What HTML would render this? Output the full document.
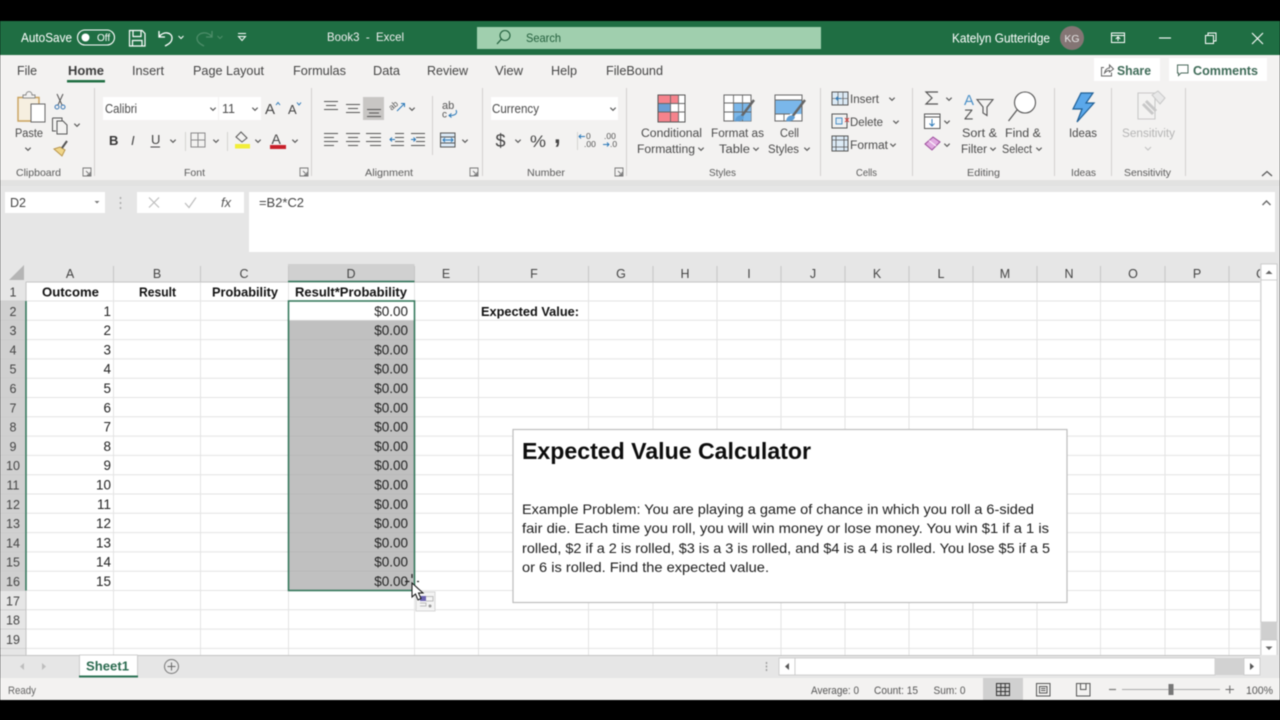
<!DOCTYPE html>
<html><head><meta charset="utf-8"><title>Book3 - Excel</title>
<style>
html,body{margin:0;padding:0;background:#000;width:1280px;height:720px;overflow:hidden}
svg{display:block;filter:blur(.4px)}
text{font-family:"Liberation Sans",sans-serif;white-space:pre}
.rb{font-size:11.5px;fill:#4a4a4a}
.gl{font-size:10.5px;fill:#5a5a5a}
.tb{font-size:13px;fill:#454545}
.hd{font-size:12.5px;fill:#444;text-anchor:middle}
.rn{font-size:12.5px;fill:#444;text-anchor:middle}
.cb{font-size:13px;font-weight:bold;fill:#111}
.cn{font-size:13.5px;fill:#222;text-anchor:end}
.body{font-size:14px;fill:#1c1c1c}
.ic{fill:none;stroke:#555;stroke-width:1.1}
.ch{fill:none;stroke:#555;stroke-width:1.1}
</style></head><body>
<svg width="1280" height="720" viewBox="0 0 1280 720" xmlns="http://www.w3.org/2000/svg">
<defs>
<path id="c" d="M-2.7 -1.3 L0 1.3 L2.7 -1.3" fill="none" stroke="#555" stroke-width="1.1"/>
<path id="lau" d="M-4 -4H4V4H-4ZM-1 -1L3 3M3 0V3H0" fill="none" stroke="#777" stroke-width=".9"/>
</defs>
<rect width="1280" height="720" fill="#000"/>
<!-- title bar -->
<rect y="21" width="1280" height="34" fill="#1f6e43"/>
<text x="21" y="42" font-size="12.5" fill="#fff" textLength="51" lengthAdjust="spacingAndGlyphs">AutoSave</text>
<rect x="77.5" y="30" width="37" height="15" rx="7.5" fill="none" stroke="#fff" stroke-width="1.1"/>
<circle cx="85.5" cy="37.5" r="4" fill="#fff"/>
<text x="97" y="41" font-size="10" fill="#fff">Off</text>
<path d="M129.5 30.5H142L145 33.5V46H129.5ZM133 30.5V36.5H141V30.5M132.5 46V40.5H142V46" fill="none" stroke="#fff" stroke-width="1.2"/>
<path d="M159 31V37H165M159.5 36.5C163 31 172 32 172 38C172 42 169 44 165 46" fill="none" stroke="#fff" stroke-width="1.3"/>
<path d="M178.5 36L181 38.5L183.5 36" fill="none" stroke="#fff" stroke-width="1"/>
<path d="M212 31V37H206M211.5 36.5C208 31 198 32 197 38C197 42 200 44 204 46" fill="none" stroke="#4d8d69" stroke-width="1.3"/>
<path d="M217.5 36L220 38.5L222.5 36" fill="none" stroke="#4d8d69" stroke-width="1"/>
<path d="M238 33.5H246M238.5 36.5H245.5L242 40.5Z" fill="none" stroke="#fff" stroke-width="1"/>
<text x="327" y="41" font-size="12" fill="#f0f0f0" textLength="77" lengthAdjust="spacingAndGlyphs">Book3  -  Excel</text>
<rect x="477" y="27" width="344" height="22" fill="#a0cfae"/>
<circle cx="505" cy="35.5" r="5" fill="none" stroke="#1f5c3a" stroke-width="1.1"/>
<path d="M501.5 39L497 44" stroke="#1f5c3a" stroke-width="1.2"/>
<text x="526" y="42" font-size="12" fill="#245f3d" textLength="35" lengthAdjust="spacingAndGlyphs">Search</text>
<text x="952" y="42.5" font-size="12.5" fill="#fff" textLength="98" lengthAdjust="spacingAndGlyphs">Katelyn Gutteridge</text>
<circle cx="1072" cy="38" r="12" fill="#847574"/>
<text x="1072" y="42" font-size="10.5" fill="#e8e8e8" text-anchor="middle">KG</text>
<path d="M1111.5 33H1124.5V42.5H1111.5ZM1111.5 35.5H1124.5M1118 41V37M1115.8 39L1118 36.8L1120.2 39" fill="none" stroke="#fff" stroke-width="1"/>
<path d="M1159 38H1171" stroke="#fff" stroke-width="1.1"/>
<path d="M1205.5 35.5H1213.5V43.5H1205.5ZM1208 35.5V33H1216V41H1213.5" fill="none" stroke="#fff" stroke-width="1"/>
<path d="M1252 33L1263 44M1263 33L1252 44" stroke="#fff" stroke-width="1.1"/>
<!-- ribbon -->
<rect y="55" width="1280" height="125" fill="#f3f2f1"/>
<rect y="180" width="1280" height="6" fill="#e2e2e1"/>
<text class="tb" x="17" y="75" textLength="20" lengthAdjust="spacingAndGlyphs">File</text>
<text class="tb" x="68" y="75" font-weight="bold" style="fill:#3d3d3d" textLength="36" lengthAdjust="spacingAndGlyphs">Home</text>
<rect x="67" y="80" width="38" height="2.5" fill="#1f6e43"/>
<text class="tb" x="132" y="75" textLength="32" lengthAdjust="spacingAndGlyphs">Insert</text>
<text class="tb" x="193" y="75" textLength="71" lengthAdjust="spacingAndGlyphs">Page Layout</text>
<text class="tb" x="293" y="75" textLength="53" lengthAdjust="spacingAndGlyphs">Formulas</text>
<text class="tb" x="373" y="75" textLength="27" lengthAdjust="spacingAndGlyphs">Data</text>
<text class="tb" x="427" y="75" textLength="41" lengthAdjust="spacingAndGlyphs">Review</text>
<text class="tb" x="495" y="75" textLength="28" lengthAdjust="spacingAndGlyphs">View</text>
<text class="tb" x="551" y="75" textLength="26" lengthAdjust="spacingAndGlyphs">Help</text>
<text class="tb" x="606" y="75" textLength="57" lengthAdjust="spacingAndGlyphs">FileBound</text>
<rect x="1094" y="58" width="66" height="23" fill="#fff"/>
<path d="M1104 67.5H1101.5V76H1111.5V72.5M1104.5 73C1105 70 1107 68 1109.5 68V65L1113.500 69L1109.5 72V70.5C1107.5 70.5 1106 71.500 1104.5 73Z" fill="none" stroke="#666" stroke-width="1"/>
<text x="1117" y="75" font-size="13" font-weight="bold" fill="#3f6b58" textLength="34" lengthAdjust="spacingAndGlyphs">Share</text>
<rect x="1169" y="58" width="98" height="23" fill="#fff"/>
<path d="M1177.5 65H1188V73H1181L1178.5 75.5V73H1177.5Z" fill="none" stroke="#4a6a5c" stroke-width="1"/>
<text x="1193" y="75" font-size="13" font-weight="bold" fill="#3f6b58" textLength="65" lengthAdjust="spacingAndGlyphs">Comments</text>
<!-- separators -->
<path d="M94.5 88V176M311.5 88V176M482.5 88V176M432.5 96V155M626.500 88V176M820.5 88V176M912.5 88V176M1054.5 88V176M1111.5 88V176M1185.5 88V176" stroke="#d2d0ce" stroke-width="1"/>
<!-- group labels -->
<text class="gl" x="16" y="176" textLength="45" lengthAdjust="spacingAndGlyphs">Clipboard</text>
<text class="gl" x="184" y="176" textLength="21" lengthAdjust="spacingAndGlyphs">Font</text>
<text class="gl" x="365" y="176" textLength="48" lengthAdjust="spacingAndGlyphs">Alignment</text>
<text class="gl" x="527" y="176" textLength="38" lengthAdjust="spacingAndGlyphs">Number</text>
<text class="gl" x="709" y="176" textLength="27" lengthAdjust="spacingAndGlyphs">Styles</text>
<text class="gl" x="856" y="176" textLength="21" lengthAdjust="spacingAndGlyphs">Cells</text>
<text class="gl" x="967" y="176" textLength="33" lengthAdjust="spacingAndGlyphs">Editing</text>
<text class="gl" x="1071" y="176" textLength="25" lengthAdjust="spacingAndGlyphs">Ideas</text>
<text class="gl" x="1124" y="176" textLength="47" lengthAdjust="spacingAndGlyphs">Sensitivity</text>
<use href="#lau" x="87" y="172"/><use href="#lau" x="304" y="172"/><use href="#lau" x="474" y="172"/><use href="#lau" x="619" y="172"/>
<path d="M1262 176L1267 171.5L1272 176" fill="none" stroke="#555" stroke-width="1.2"/>
<!-- clipboard -->
<path d="M18 97.5H39V121H18Z" fill="#f6efe0" stroke="#c9a15c" stroke-width="1.4"/>
<path d="M23 98V95H26C26 90.5 32 90.500 32 95H35V98Z" fill="#f3f2f1" stroke="#888" stroke-width="1"/>
<rect x="31" y="104" width="14" height="18" fill="#fff" stroke="#666" stroke-width="1"/>
<text class="rb" x="15" y="137" textLength="28" lengthAdjust="spacingAndGlyphs">Paste</text>
<use href="#c" x="28" y="149"/>
<path d="M57 94L62 105M63 94L58 105" stroke="#555" stroke-width="1"/><circle cx="57" cy="107" r="2" fill="none" stroke="#3a78b5"/><circle cx="63" cy="107" r="2" fill="none" stroke="#3a78b5"/>
<path d="M52.5 118H62V121M52.5 118V131H56M57 121H63L67 125V134H57Z" fill="none" stroke="#555" stroke-width="1"/>
<use href="#c" x="77" y="125"/>
<path d="M54 149L62 156L65 150L60 147Z" fill="#f0d68a" stroke="#b8944a" stroke-width="1"/><path d="M62 148L67 141" stroke="#555" stroke-width="2"/>
<!-- font -->
<rect x="103" y="97" width="115" height="23" fill="#fff"/>
<rect x="219" y="97" width="42" height="23" fill="#fff"/>
<text class="rb" x="105" y="113" textLength="32" lengthAdjust="spacingAndGlyphs" style="font-size:12.5px">Calibri</text>
<use href="#c" x="213" y="109"/>
<text class="rb" x="222" y="113" style="font-size:12.5px">11</text>
<use href="#c" x="255" y="109"/>
<text x="265" y="114" font-size="15" fill="#444">A</text><path d="M276 105L278 102.5L280 105" fill="none" stroke="#2a78b8" stroke-width="1"/>
<text x="288" y="114" font-size="13" fill="#444">A</text><path d="M297 102.5L299 105L301 102.5" fill="none" stroke="#2a78b8" stroke-width="1"/>
<text x="109" y="145" font-size="13" font-weight="bold" fill="#333">B</text>
<text x="131" y="145" font-size="13" font-style="italic" fill="#444" font-family="Liberation Serif">I</text>
<text x="151" y="144" font-size="13" fill="#444">U</text><path d="M150.5 147H160" stroke="#444" stroke-width="1"/>
<use href="#c" x="173" y="141"/>
<path d="M185.5 132V151M227.5 132V151" stroke="#d5d3d1"/>
<path d="M191 133H205V147H191ZM198 133V147M191 140H205" fill="none" stroke="#8a8a8a" stroke-width="1"/>
<use href="#c" x="216" y="141"/>
<path d="M236 137L241 132L247 138L242 142Z" fill="none" stroke="#555" stroke-width="1"/>
<rect x="235" y="144" width="15" height="4.5" fill="#f2ee38"/>
<use href="#c" x="258" y="141"/>
<text x="271.5" y="144" font-size="14" fill="#444">A</text>
<rect x="270" y="145" width="16" height="4" fill="#c8202a"/>
<use href="#c" x="295" y="141"/>
<!-- alignment -->
<rect x="363" y="97" width="21" height="23" fill="#c8c6c4"/>
<path class="ic" d="M324 101.5H338M326 105.5H336M324 109.5H338M346 104.5H360M348 108.5H358M346 112.5H360M367 109.5H381M369 113H379M367 116.5H381"/>
<text x="389" y="108" font-size="8.5" fill="#555" transform="rotate(-40 394 106)">ab</text>
<path d="M397 111L404 104M401 103.5H404.5V107" fill="none" stroke="#2a78b8" stroke-width="1"/>
<use href="#c" x="412" y="109"/>
<path class="ic" d="M324 133.5H338M324 137.500H334M324 141.5H338M324 145.5H334M346 133.5H360M348 137.5H358M346 141.5H360M348 145.5H358M366 133.5H381M370 137.5H381M366 141.5H381M370 145.5H381M395 133.5H404M395 137.5H404M395 141.5H404M391 145.5H404M411 133.5H425M416 137.5H425M416 141.5H425M411 145.5H425"/>
<path d="M390 139.5H395M392 137.5L390 139.5L392 141.5M411 139.5H415M413.5 137.5L415.5 139.5L413.5 141.5" fill="none" stroke="#2a78b8" stroke-width="1"/>
<text x="442" y="109" font-size="11" fill="#555">ab</text><text x="442" y="117.5" font-size="10" fill="#555">c</text>
<path d="M456 110C458 114 454 116 449 115.5M451.5 113.5L449 115.5L451.5 117.5" fill="none" stroke="#2a78b8" stroke-width="1"/>
<path d="M440.5 133H455V147H440.5ZM440.5 137H455M440.5 143H455" fill="#dcebf6" stroke="#555" stroke-width="1"/>
<path d="M443 140H453M445 138L443 140L445 142M451 138L453 140L451 142" fill="none" stroke="#2a78b8" stroke-width=".9"/>
<use href="#c" x="465" y="141"/>
<!-- number -->
<rect x="491" y="97" width="127" height="23" fill="#fff"/>
<text class="rb" x="492" y="113" style="font-size:12.5px" textLength="47" lengthAdjust="spacingAndGlyphs">Currency</text>
<use href="#c" x="613" y="109"/>
<text x="495.500" y="147" font-size="18" fill="#444">$</text>
<use href="#c" x="518" y="141"/>
<text x="530" y="147" font-size="17" fill="#444" textLength="16" lengthAdjust="spacingAndGlyphs">%</text>
<text x="554" y="143" font-size="24" font-weight="bold" fill="#444">,</text>
<path d="M577.5 132V150" stroke="#d5d3d1"/>
<text x="586" y="139" font-size="8.5" fill="#555">0</text><text x="584" y="147" font-size="8.5" fill="#555">.00</text>
<path d="M579 136.5H585M581 134.5L579 136.5L581 138.5" fill="none" stroke="#2a78b8" stroke-width=".9"/>
<text x="604" y="139" font-size="8.5" fill="#555">.00</text><text x="610" y="147" font-size="8.5" fill="#555">.0</text>
<path d="M603 144.5H609M607 142.5L609 144.5L607 146.5" fill="none" stroke="#2a78b8" stroke-width=".9"/>
<!-- styles -->
<rect x="658" y="95" width="27" height="27" fill="#fff" stroke="#555"/>
<rect x="658.5" y="95.5" width="20" height="8" fill="#f5838c"/><rect x="658.5" y="112" width="20" height="9.5" fill="#f5838c"/>
<rect x="658.5" y="104" width="12" height="8" fill="#6b9fd4"/>
<path d="M658.5 103.5H685M658.5 112H685M670.5 95V122M678.5 95V122" stroke="#666" fill="none" stroke-width=".9"/>
<text class="rb" x="641" y="137" textLength="61" lengthAdjust="spacingAndGlyphs">Conditional</text>
<text class="rb" x="637" y="153" textLength="58" lengthAdjust="spacingAndGlyphs">Formatting</text>
<use href="#c" x="701" y="149"/>
<rect x="724" y="95" width="27" height="26" fill="#fff" stroke="#666"/>
<rect x="734" y="103" width="17" height="18" fill="#7ab7ea"/>
<path d="M724 103H751M724 112H751M733.5 95V121M742.5 95V121" stroke="#666" stroke-width=".9" fill="none"/>
<path d="M754 100L741 117" stroke="#666" stroke-width="2.5"/><path d="M735 121C736 115 741 114 744 117C743 121 738 122 735 121Z" fill="#5f9fd6"/>
<text class="rb" x="711" y="137" textLength="53" lengthAdjust="spacingAndGlyphs">Format as</text>
<text class="rb" x="719" y="153" textLength="31" lengthAdjust="spacingAndGlyphs">Table</text>
<use href="#c" x="756" y="149"/>
<rect x="775" y="95" width="27" height="26" fill="#fff" stroke="#666"/>
<rect x="775.5" y="100" width="26" height="14" fill="#7ab7ea"/>
<path d="M775 100H802M775 114H790M784 114V121" stroke="#666" stroke-width=".9" fill="none"/>
<path d="M805 100L792 117" stroke="#666" stroke-width="2.5"/><path d="M786 121C787 115 792 114 795 117C794 121 789 122 786 121Z" fill="#5f9fd6"/>
<text class="rb" x="780" y="137" textLength="19" lengthAdjust="spacingAndGlyphs">Cell</text>
<text class="rb" x="768" y="153" textLength="31" lengthAdjust="spacingAndGlyphs">Styles</text>
<use href="#c" x="807" y="149"/>
<!-- cells -->
<rect x="832" y="92" width="16" height="13" fill="#dcebf6" stroke="#555"/>
<path d="M838 98.5H848M838 92V105M843 92V105M832 98.5H838" stroke="#666" stroke-width=".8" fill="none"/><path d="M836 98.5H841M838 96.5L836 98.5L838 100.5" stroke="#2a78b8" fill="none"/>
<text class="rb" x="850" y="103" textLength="29" lengthAdjust="spacingAndGlyphs">Insert</text><use href="#c" x="892" y="99"/>
<rect x="832" y="114" width="15" height="14" fill="#f3f2f1" stroke="#555"/>
<rect x="836" y="118" width="6" height="6" fill="#dcebf6" stroke="#2a78b8" stroke-width=".8"/><path d="M845 118L849 122M849 118L845 122" stroke="#d04040"/>
<text class="rb" x="850" y="126" textLength="33" lengthAdjust="spacingAndGlyphs">Delete</text><use href="#c" x="896" y="122"/>
<rect x="832" y="136" width="16" height="15" fill="#dcebf6" stroke="#555"/>
<path d="M832 140H848M832 147H848M836 136V151M844 136V151" stroke="#555" stroke-width=".8"/>
<text class="rb" x="850" y="149" textLength="38" lengthAdjust="spacingAndGlyphs">Format</text><use href="#c" x="893" y="145"/>
<!-- editing -->
<path d="M938 92H926L932 98L926 104H938" fill="none" stroke="#555" stroke-width="1.2"/><use href="#c" x="949" y="99"/>
<path d="M924.5 114H940V128.5H924.5ZM924.5 117H940" fill="#fff" stroke="#555"/><path d="M932 119V126M929.5 123.5L932 126L934.5 123.5" fill="none" stroke="#2a78b8"/>
<use href="#c" x="947" y="122"/>
<path d="M925 144L933 137L940 142L932 150Z" fill="#e0a8e0" stroke="#9a4a9a"/><path d="M929 140.5L936 146" stroke="#fff"/>
<use href="#c" x="947" y="145"/>
<text x="964" y="105" font-size="15" fill="#4a90c8">A</text><text x="964" y="119.500" font-size="15" fill="#555">Z</text>
<path d="M977 99.5H993L987 107V115.500L983 113V107Z" fill="none" stroke="#555" stroke-width="1.1"/>
<text class="rb" x="962" y="137" textLength="35" lengthAdjust="spacingAndGlyphs">Sort &amp;</text>
<text class="rb" x="961" y="153" textLength="26" lengthAdjust="spacingAndGlyphs">Filter</text><use href="#c" x="993" y="149"/>
<circle cx="1025" cy="102.5" r="10.5" fill="#fff" stroke="#555" stroke-width="1.1"/><path d="M1017 110L1008.5 121" stroke="#555" stroke-width="1.2"/>
<text class="rb" x="1005" y="137" textLength="36" lengthAdjust="spacingAndGlyphs">Find &amp;</text>
<text class="rb" x="1002" y="153" textLength="30" lengthAdjust="spacingAndGlyphs">Select</text><use href="#c" x="1039" y="149"/>
<!-- ideas -->
<path d="M1081 93H1093L1086 103H1094L1077 122L1082 109H1073Z" fill="#5ba8ea" stroke="#1f5f95" stroke-width="1.2"/>
<text class="rb" x="1069" y="137" textLength="28" lengthAdjust="spacingAndGlyphs">Ideas</text>
<!-- sensitivity -->
<path d="M1138 93H1155V119H1138Z" fill="#f3f2f1" stroke="#c8c8c8" stroke-width="1.1"/>
<path d="M1143 104L1153 114M1146 101L1156 111" stroke="#c8c8c8" stroke-width="3" fill="none"/>
<path d="M1152 95L1158 91L1165 98L1160 104Z" fill="#e8e8e8" stroke="#c8c8c8"/>
<text class="rb" x="1122" y="137" style="fill:#b5b5b5" textLength="53" lengthAdjust="spacingAndGlyphs">Sensitivity</text>
<path d="M1145 147L1148 150L1151 147" fill="none" stroke="#c0c0c0"/>
<!-- formula bar -->
<rect y="186" width="1280" height="78" fill="#e6e6e6"/>
<rect x="5" y="192" width="100" height="21" fill="#fff"/>
<text x="10" y="207" font-size="12.5" fill="#444">D2</text>
<path d="M94.5 201H99.5L97 203.5Z" fill="#777"/>
<path d="M120.5 197V199M120.5 202V204M120.5 207V209" stroke="#aaa" stroke-width="1.5"/>
<rect x="137" y="192" width="107" height="21" fill="#fff"/>
<path d="M149 197.5L159 207.5M159 197.5L149 207.5" stroke="#bdbdbd" stroke-width="1.2"/>
<path d="M185 203L189 207.5L196 197.5" fill="none" stroke="#bdbdbd" stroke-width="1.2"/>
<text x="221" y="207" font-size="13" font-style="italic" fill="#555" font-family="Liberation Serif">fx</text>
<rect x="249" y="192" width="1026" height="60" fill="#fff"/>
<text x="259" y="207" font-size="12.5" fill="#444" textLength="45" lengthAdjust="spacingAndGlyphs">=B2*C2</text>
<path d="M1262.5 205L1266.5 201L1270.5 205" fill="none" stroke="#666" stroke-width="1.4"/>
<!-- sheet -->
<rect x="0" y="264" width="1280" height="391" fill="#fff"/>
<rect x="0" y="264" width="1260" height="18" fill="#e6e6e6"/>
<rect x="0" y="282" width="26" height="373" fill="#e6e6e6"/>
<path d="M24 265V280H9Z" fill="#b5b5b5"/>
<rect x="288" y="264" width="126.5" height="18" fill="#d0d0d0"/>
<rect x="0" y="301" width="26" height="289.5" fill="#d0d0d0"/>
<!-- grid lines -->
<path d="M26 301H1260M26 320.3H1260M26 339.6H1260M26 358.9H1260M26 378.2H1260M26 397.5H1260M26 416.8H1260M26 436.1H1260M26 455.4H1260M26 474.7H1260M26 494H1260M26 513.3H1260M26 532.6H1260M26 551.9H1260M26 571.2H1260M26 590.5H1260M26 609.8H1260M26 629.1H1260M26 648.4H1260" stroke="#e4e4e4" stroke-width="1"/>
<path d="M113.5 282V655M200.5 282V655M288.5 282V655M414.5 282V655M478.5 282V655M588.5 282V655M653 282V655M717 282V655M781 282V655M845 282V655M909 282V655M973 282V655M1037 282V655M1100.5 282V655M1165 282V655M1229 282V655" stroke="#e4e4e4" stroke-width="1"/>
<path d="M113.5 266V282M200.5 266V282M288.5 266V282M414.5 266V282M478.5 266V282M588.5 266V282M653 266V282M717 266V282M781 266V282M845 266V282M909 266V282M973 266V282M1037 266V282M1100.5 266V282M1165 266V282M1229 266V282" stroke="#c6c6c6" stroke-width="1"/>
<path d="M26 282H1260" stroke="#c4c4c4" stroke-width="1"/>
<path d="M0 301H26M0 320.3H26M0 339.6H26M0 358.9H26M0 378.2H26M0 397.5H26M0 416.8H26M0 436.1H26M0 455.4H26M0 474.7H26M0 494H26M0 513.3H26M0 532.6H26M0 551.9H26M0 571.2H26M0 590.5H26M0 609.8H26M0 629.1H26M0 648.4H26" stroke="#c9c9c9" stroke-width=".8"/>
<path d="M26 282V655" stroke="#c4c4c4" stroke-width="1"/>
<!-- selection -->
<rect x="289" y="320.5" width="125" height="270" fill="#c0c0c0"/>
<path d="M289 339.6H414M289 358.9H414M289 378.2H414M289 397.5H414M289 416.8H414M289 436.1H414M289 455.4H414M289 474.7H414M289 494H414M289 513.3H414M289 532.6H414M289 551.9H414M289 571.2H414" stroke="#b6b6b6" stroke-width=".8"/>
<rect x="288.5" y="301" width="126" height="289.5" fill="none" stroke="#2d7356" stroke-width="1.5"/>
<path d="M288 281.5H414.5" stroke="#2d7356" stroke-width="1.5"/>
<path d="M26 301V590.5" stroke="#2d7356" stroke-width="1.5"/>
<!-- column headers -->
<g class="col">
<text class="hd" x="70" y="278">A</text><text class="hd" x="157" y="278">B</text><text class="hd" x="244" y="278">C</text><text class="hd" x="351" y="278">D</text><text class="hd" x="446" y="278">E</text><text class="hd" x="534" y="278">F</text><text class="hd" x="621" y="278">G</text><text class="hd" x="685" y="278">H</text><text class="hd" x="749" y="278">I</text><text class="hd" x="813" y="278">J</text><text class="hd" x="877" y="278">K</text><text class="hd" x="941" y="278">L</text><text class="hd" x="1005" y="278">M</text><text class="hd" x="1069" y="278">N</text><text class="hd" x="1133" y="278">O</text><text class="hd" x="1197" y="278">P</text><text class="hd" x="1261" y="278">Q</text>
</g>
<rect x="1260" y="264" width="20" height="391" fill="#e6e6e6"/>
<!-- row numbers -->
<text class="rn" x="13" y="296.5">1</text><text class="rn" x="13" y="315.8">2</text><text class="rn" x="13" y="335.1">3</text><text class="rn" x="13" y="354.4">4</text><text class="rn" x="13" y="373.7">5</text><text class="rn" x="13" y="393">6</text><text class="rn" x="13" y="412.3">7</text><text class="rn" x="13" y="431.6">8</text><text class="rn" x="13" y="450.9">9</text><text class="rn" x="13" y="470.2">10</text><text class="rn" x="13" y="489.5">11</text><text class="rn" x="13" y="508.8">12</text><text class="rn" x="13" y="528.1">13</text><text class="rn" x="13" y="547.4">14</text><text class="rn" x="13" y="566.7">15</text><text class="rn" x="13" y="586">16</text><text class="rn" x="13" y="605.3">17</text><text class="rn" x="13" y="624.6">18</text><text class="rn" x="13" y="643.9">19</text>
<!-- cells -->
<text class="cb" x="42" y="296.5" textLength="57" lengthAdjust="spacingAndGlyphs">Outcome</text>
<text class="cb" x="139" y="296.5" textLength="37" lengthAdjust="spacingAndGlyphs">Result</text>
<text class="cb" x="212" y="296.5" textLength="66" lengthAdjust="spacingAndGlyphs">Probability</text>
<text class="cb" x="295" y="296.5" textLength="112" lengthAdjust="spacingAndGlyphs">Result*Probability</text>
<text class="cb" x="481" y="315.8" textLength="98" lengthAdjust="spacingAndGlyphs">Expected Value:</text>
<text class="cn" x="111" y="315.8">1</text><text class="cn" x="111" y="335.1">2</text><text class="cn" x="111" y="354.4">3</text><text class="cn" x="111" y="373.7">4</text><text class="cn" x="111" y="393">5</text><text class="cn" x="111" y="412.3">6</text><text class="cn" x="111" y="431.6">7</text><text class="cn" x="111" y="450.9">8</text><text class="cn" x="111" y="470.2">9</text><text class="cn" x="111" y="489.5">10</text><text class="cn" x="111" y="508.8">11</text><text class="cn" x="111" y="528.1">12</text><text class="cn" x="111" y="547.4">13</text><text class="cn" x="111" y="566.7">14</text><text class="cn" x="111" y="586">15</text>
<text class="cn" x="408" y="315.8">$0.00</text><text class="cn" x="408" y="335.1">$0.00</text><text class="cn" x="408" y="354.4">$0.00</text><text class="cn" x="408" y="373.7">$0.00</text><text class="cn" x="408" y="393">$0.00</text><text class="cn" x="408" y="412.3">$0.00</text><text class="cn" x="408" y="431.6">$0.00</text><text class="cn" x="408" y="450.9">$0.00</text><text class="cn" x="408" y="470.2">$0.00</text><text class="cn" x="408" y="489.5">$0.00</text><text class="cn" x="408" y="508.8">$0.00</text><text class="cn" x="408" y="528.1">$0.00</text><text class="cn" x="408" y="547.4">$0.00</text><text class="cn" x="408" y="566.7">$0.00</text><text class="cn" x="408" y="586">$0.00</text>
<!-- text box -->
<rect x="513" y="429.5" width="554" height="173" fill="#fff" stroke="#bdbdbd" stroke-width="1.2"/>
<text x="522" y="459" font-size="23" font-weight="bold" fill="#0d0d0d" textLength="289" lengthAdjust="spacingAndGlyphs">Expected Value Calculator</text>
<text class="body" x="522" y="514" textLength="512" lengthAdjust="spacingAndGlyphs">Example Problem: You are playing a game of chance in which you roll a 6-sided</text>
<text class="body" x="522" y="533" textLength="527" lengthAdjust="spacingAndGlyphs">fair die. Each time you roll, you will win money or lose money. You win $1 if a 1 is</text>
<text class="body" x="522" y="553" textLength="528" lengthAdjust="spacingAndGlyphs">rolled, $2 if a 2 is rolled, $3 is a 3 is rolled, and $4 is a 4 is rolled. You lose $5 if a 5</text>
<text class="body" x="522" y="572" textLength="247" lengthAdjust="spacingAndGlyphs">or 6 is rolled. Find the expected value.</text>
<!-- quick analysis + cursor -->
<rect x="416" y="592" width="19" height="19" fill="#f4f4f4" stroke="#d5d5d5"/>
<rect x="420" y="596" width="6" height="5" fill="#6a62b0"/><path d="M426 596.5H433V601H426M420 603H426V606H420" fill="none" stroke="#bbb"/>
<circle cx="430" cy="606" r="1.5" fill="#999"/>
<path d="M412 574V578M409.5 581.5H405M417 581.5H419" stroke="#222" stroke-width="1.3"/>
<path d="M412 583V597L415.5 594L418 600L421 598.5L418.5 593H423Z" fill="#fff" stroke="#111" stroke-width="1"/>
<!-- vertical scrollbar -->
<rect x="1261" y="264" width="16" height="358" fill="#fff" stroke="#c8c8c8" stroke-width=".8"/>
<rect x="1261" y="264" width="16" height="16" fill="#fff" stroke="#c8c8c8" stroke-width=".8"/>
<path d="M1265.5 274L1269 270.5L1272.5 274Z" fill="#666"/>
<rect x="1261" y="622" width="16" height="18" fill="#cfcfcf"/>
<rect x="1261" y="640" width="16" height="16" fill="#fff" stroke="#c8c8c8" stroke-width=".8"/>
<path d="M1265.5 646.5L1269 650L1272.5 646.5Z" fill="#666"/>
<!-- tab bar -->
<rect y="655" width="1280" height="23" fill="#e6e6e6"/>
<path d="M0 655.5H80M138 655.5H1260" stroke="#c4c4c4"/>
<path d="M24 663L20 666.5L24 670Z" fill="#bdbdbd"/><path d="M42 663L46 666.5L42 670Z" fill="#bdbdbd"/>
<rect x="79.5" y="655" width="58" height="22" fill="#fff" stroke="#c4c4c4" stroke-width=".8"/>
<rect x="79" y="675.5" width="59" height="2" fill="#2d7356"/>
<text x="86" y="670.5" font-size="13" font-weight="bold" fill="#2b6b50" textLength="43" lengthAdjust="spacingAndGlyphs">Sheet1</text>
<circle cx="171.5" cy="666.5" r="7" fill="none" stroke="#777" stroke-width="1"/>
<path d="M171.5 662.5V670.5M167.5 666.5H175.5" stroke="#666" stroke-width="1"/>
<path d="M766.5 662V664M766.5 665.5V667.5M766.5 669V671" stroke="#999" stroke-width="1.3"/>
<rect x="779" y="658" width="16" height="17" fill="#fff" stroke="#c8c8c8" stroke-width=".8"/>
<path d="M789 663L785 666.5L789 670Z" fill="#555"/>
<rect x="795" y="658" width="420" height="17" fill="#fff" stroke="#c8c8c8" stroke-width=".8"/>
<rect x="1215" y="658" width="29" height="17" fill="#d2d2d2"/>
<rect x="1244" y="658" width="16" height="17" fill="#fff" stroke="#c8c8c8" stroke-width=".8"/>
<path d="M1250 663L1254 666.5L1250 670Z" fill="#555"/>
<!-- status bar -->
<rect y="678" width="1280" height="22" fill="#f3f2f1"/>
<text x="8" y="694" font-size="11" fill="#666" textLength="28" lengthAdjust="spacingAndGlyphs">Ready</text>
<text x="811" y="694" font-size="11" fill="#555" textLength="48" lengthAdjust="spacingAndGlyphs">Average: 0</text>
<text x="874" y="694" font-size="11" fill="#555" textLength="44" lengthAdjust="spacingAndGlyphs">Count: 15</text>
<text x="933.5" y="694" font-size="11" fill="#555" textLength="32" lengthAdjust="spacingAndGlyphs">Sum: 0</text>
<rect x="983" y="678" width="40" height="22" fill="#d0d0d0"/>
<path d="M996.5 683.5H1009.5V695.5H996.5ZM996.5 687.5H1009.5M996.5 691.5H1009.5M1000.8 683.5V695.5M1005.2 683.5V695.5" fill="none" stroke="#333" stroke-width="1"/>
<path d="M1036.5 683.5H1050V696H1036.5ZM1039.5 686.5H1047V693H1039.5ZM1041 688.5H1045.5M1041 690.5H1045.5" fill="none" stroke="#555" stroke-width="1"/>
<path d="M1076.5 683.5H1090V696H1076.5ZM1080.5 683.5V689.5H1086V683.5" fill="none" stroke="#555" stroke-width="1"/>
<path d="M1109 689.5H1116" stroke="#777" stroke-width="1.2"/>
<path d="M1122 689.5H1220" stroke="#aaa" stroke-width="1"/>
<rect x="1168.5" y="684" width="5" height="11" fill="#777"/>
<path d="M1225.5 689.5H1234M1229.8 685.5V693.5" stroke="#666" stroke-width="1"/>
<text x="1246" y="694" font-size="11" fill="#555" textLength="27" lengthAdjust="spacingAndGlyphs">100%</text>
</svg>
</body></html>
